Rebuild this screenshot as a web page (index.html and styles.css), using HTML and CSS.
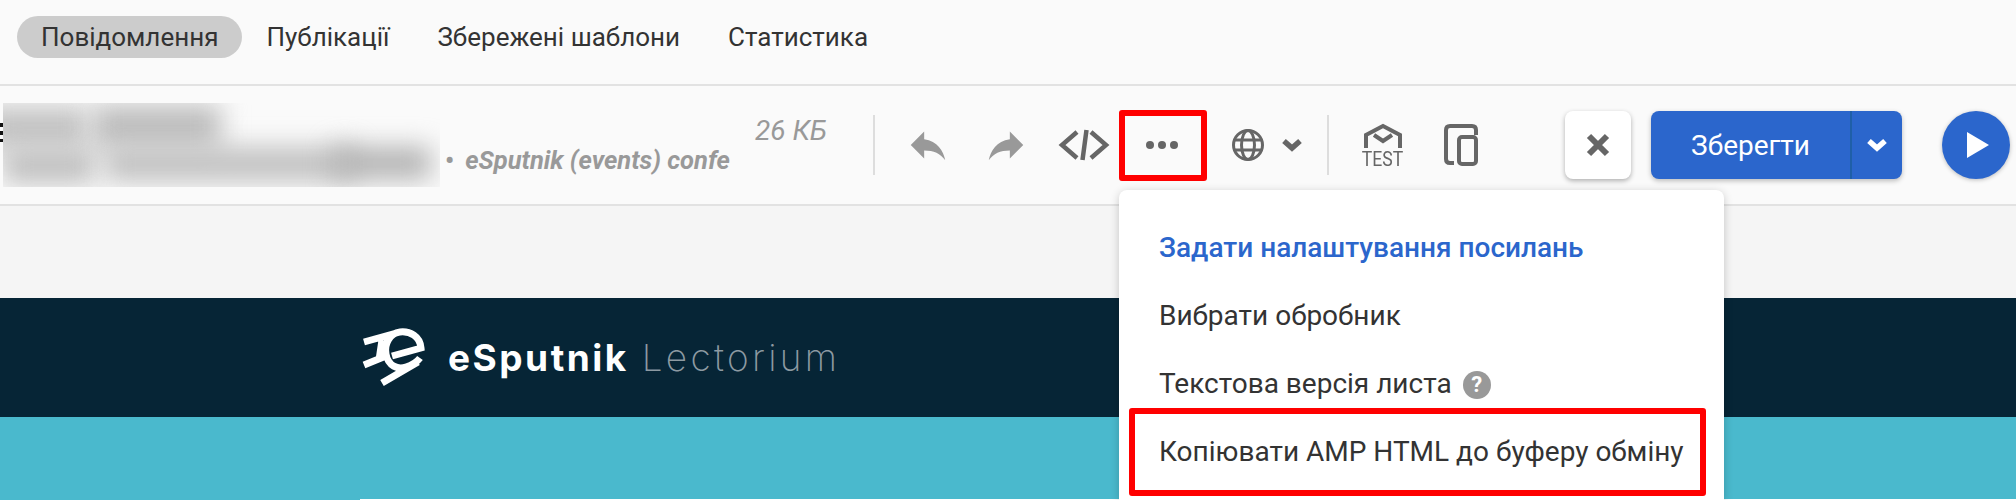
FILE: index.html
```html
<!DOCTYPE html>
<html lang="uk">
<head>
  <meta charset="UTF-8" />
  <title>Редактор листа</title>
  <link rel="stylesheet" href="styles.css">
</head>
<body>
  <!-- tabs -->
  <nav class="tabs">
    <a class="tab active" href="#">Повідомлення</a>
    <a class="tab" href="#">Публікації</a>
    <a class="tab" href="#">Збережені шаблони</a>
    <a class="tab" href="#">Статистика</a>
  </nav>

  <!-- editor toolbar -->
  <div class="toolbar">
    <span class="cut"></span>
    <div class="subject">
      <div class="smudge">
        <span class="blob blob-top-a"></span>
        <span class="blob blob-top-b"></span>
        <span class="blob blob-bottom-a"></span>
        <span class="blob blob-bottom-b"></span>
        <span class="blob blob-bottom-c"></span>
      </div>
      <div class="sender"><span class="dot">•</span>eSputnik (events) confe</div>
    </div>
    <span class="size">26 КБ</span>
    <span class="divider first"></span>

    <div class="tools">
      <button class="tool">
        <svg class="light" width="46" height="46" viewBox="0 0 24 24"><path d="M10 9V5l-7 7 7 7v-4.1c5 0 8.500 1.600 11 5.100-1-5-4-10-11-11z"/></svg>
      </button>
      <button class="tool">
        <svg class="light" width="46" height="46" viewBox="0 0 24 24"><path d="M14 9V5l7 7-7 7v-4.100c-5 0-8.500 1.600-11 5.100 1-5 4-10 11-11z"/></svg>
      </button>
      <button class="tool">
        <svg class="line" width="52" height="36" viewBox="0 0 52 36" stroke-width="4.500"><path d="M19 5 4 18l15 13M33 5l15 13-15 13M28.500 3l-4 30"/></svg>
      </button>
      <button class="tool tool-more">
        <svg class="dark" width="32" height="10" viewBox="0 0 32 10"><circle cx="4" cy="5" r="4"/><circle cx="16" cy="5" r="4"/><circle cx="28" cy="5" r="4"/></svg>
        <span class="mark mark-more"></span>
      </button>
    </div>

    <button class="lang">
      <svg class="line" width="32" height="32" viewBox="0 0 32 32" stroke-width="3"><circle cx="16" cy="16" r="14.500"/><ellipse cx="16" cy="16" rx="6.500" ry="14.500"/><path d="M2 11h28M2 21h28"/></svg>
      <svg class="line" width="22" height="14" viewBox="0 0 22 14" stroke-width="5.500"><path d="m3 3 8 7 8-7"/></svg>
    </button>
    <span class="divider second"></span>

    <button class="tool tool-test">
      <svg class="line" width="40" height="26" viewBox="0 0 40 26" stroke-width="4"><path d="M3 25V12L20 3l17 9v13M11 12l9 6 9-6"/></svg>
      <span class="test-label">TEST</span>
    </button>
    <button class="tool">
      <svg class="line" width="34" height="42" viewBox="0 0 34 42" stroke-width="4"><path d="M10 39H6q-4 0-4-4V6q0-4 4-4h22q4 0 4 4v5"/><rect x="15" y="13" width="17" height="27" rx="3"/></svg>
    </button>

    <button class="close">
      <svg class="line" width="24" height="24" viewBox="0 0 24 24" stroke-width="6"><path d="m3 3 18 18M21 3 3 21"/></svg>
    </button>
    <div class="save">
      <button class="save-main">Зберегти</button>
      <button class="save-more">
        <svg width="22" height="14" viewBox="0 0 22 14"><path d="m3 3 8 7 8-7" fill="none" stroke="#fff" stroke-width="5.500"/></svg>
      </button>
    </div>
    <button class="play">
      <svg width="22" height="26" viewBox="0 0 22 26"><path d="M0 0l22 13L0 26z" fill="#fff"/></svg>
    </button>
  </div>

  <div class="gap"></div>

  <!-- letter preview -->
  <div class="banner">
    <svg class="logo" width="100" height="75" viewBox="0 0 100 75" fill="none" stroke="#fff" stroke-width="7">
      <path d="M14 22 50 12M42 36l29-8C70 16 60 11 50 12 40 13 34 24 36 34c2 12 12 16 20 13 6-2 11-5 14-9M68 42 32 63M32 20l-3 20M14 45l22-9"/>
    </svg>
    <span class="brand">eSputnik</span>
    <span class="brand-sub">Lectorium</span>
  </div>
  <div class="hero">
    <div class="hero-card"></div>
  </div>

  <!-- dropdown -->
  <ul class="menu">
    <li class="menu-item current">Задати налаштування посилань</li>
    <li class="menu-item">Вибрати обробник</li>
    <li class="menu-item">Текстова версія листа <span class="hint">?</span></li>
    <li class="menu-item">Копіювати AMP HTML до буферу обміну<span class="mark mark-copy"></span></li>
  </ul>
</body>
</html>
```

FILE: styles.css
```css
:root {
  --blue: #2b66cc;
  --text: #333;
  --icon: #666;
  --line: #e2e2e2;
  --red: #f00;
}

* {
  margin: 0;
  padding: 0;
  box-sizing: border-box;
}

html, body {
  height: 500px;
  overflow: hidden;
}
body {
  position: relative;
  background: #f5f5f5;
  color: var(--text);
  font-family: Roboto, 'Liberation Sans', sans-serif;
  font-size: 28px;
}
button {
  border: 0;
  background: none;
  font: inherit;
  color: inherit;
  display: flex;
  align-items: center;
  justify-content: center;
}

/* TABS */
.tabs {
  height: 86px;
  padding: 16px 0 0 17px;
  display: flex;
  align-items: flex-start;
  background: #fafafa;
  border-bottom: 2px solid var(--line);
  font-size: 26px;
}
.tab {
  height: 42px;
  line-height: 42px;
  padding: 0 24px;
  border-radius: 21px;
  color: var(--text);
  text-decoration: none;
}
.tab.active { background: #ccc; }

/* TOOLBAR */
.toolbar {
  height: 120px;
  display: flex;
  align-items: center;
  background: #fafafa;
  border-bottom: 2px solid var(--line);
}
.cut {
  width: 3px;
  height: 19px;
  margin-bottom: 26px;
  background: repeating-linear-gradient(#111 0 4px, #fafafa 4px 8px);
}
.subject {
  width: 727px;
  display: flex;
  align-items: flex-end;
  overflow: hidden;
}
.smudge {
  position: relative;
  width: 437px;
  height: 84px;
  flex: none;
  overflow: hidden;
}
.blob {
  position: absolute;
  background: #bbb;
  filter: blur(13px);
}
.blob-top-a { left: -20px; top: 4px; width: 105px; height: 42px; background: #c2c2c2; }
.blob-top-b { left: 90px; top: 2px; width: 128px; height: 44px; background: #bdbdbd; }
.blob-bottom-a { left: 0; top: 46px; width: 92px; height: 34px; background: #bebebe; }
.blob-bottom-b { left: 102px; top: 44px; width: 250px; height: 34px; background: #c0c0c0; }
.blob-bottom-c { left: 330px; top: 44px; width: 98px; height: 32px; background: #b2b2b2; }
.sender {
  flex: none;
  padding-bottom: 12px;
  color: #999;
  font-size: 25.5px;
  font-style: italic;
  font-weight: 700;
  white-space: nowrap;
}
.dot { margin: 0 11px 0 5px; font-style: normal; }
.size {
  width: 72px;
  margin: 0 0 30px 25px;
  color: #999;
  font-size: 28px;
  font-style: italic;
  white-space: nowrap;
}
.divider {
  width: 2px;
  height: 60px;
  background: #ddd;
}
.divider.first { margin-left: 46px; }
.divider.second { margin-left: 15px; }

.light { fill: #999; }
.dark { fill: var(--icon); }
.line { fill: none; stroke: var(--icon); }

.tools {
  display: flex;
  margin-left: 14px;
}
.tool {
  position: relative;
  width: 78px;
  height: 60px;
}
.tool-test {
  margin-left: 15px;
  flex-direction: column;
  gap: 2px;
}
.test-label {
  color: var(--icon);
  font-size: 20px;
  line-height: 16px;
  transform: scaleX(0.88);
}
.lang {
  width: 80px;
  height: 60px;
  margin-left: 31px;
  gap: 17px;
  justify-content: flex-start;
}

/* the red marks over the screenshot */
.mark {
  position: absolute;
  border: 6px solid var(--red);
  border-radius: 3px;
}
.mark-more { left: -4px; right: -6px; top: -5px; bottom: -6px; }
.mark-copy { left: 10px; right: 18px; top: -10px; bottom: -10px; }

.close {
  width: 66px;
  height: 68px;
  margin-left: 65px;
  background: #fff;
  border-radius: 8px;
  box-shadow: 0 2px 5px rgba(0,0,0,0.3);
}
.save {
  width: 251px;
  height: 68px;
  margin-left: 20px;
  display: flex;
  background: var(--blue);
  border-radius: 8px;
  box-shadow: 0 2px 5px rgba(0,0,0,0.25);
}
.save-main {
  width: 201px;
  color: #fff;
  border-right: 2px solid #1f5fa8;
}
.save-more { flex: 1; }
.play {
  width: 68px;
  height: 68px;
  margin-left: 40px;
  padding-left: 4px;
  background: var(--blue);
  border-radius: 50%;
  box-shadow: 0 1px 4px rgba(0,0,0,0.25);
}

.gap { height: 92px; }

/* LETTER PREVIEW */
.banner {
  height: 119px;
  padding-left: 350px;
  display: flex;
  align-items: center;
  background: #062536;
  color: #fff;
}
.logo { flex: none; }
.brand {
  margin-left: -2px;
  font-family: Inter, sans-serif;
  font-size: 37px;
  font-weight: 700;
  letter-spacing: 2.5px;
}
.brand-sub {
  margin-left: 13px;
  color: #8d9aa2;
  font-family: Inter, sans-serif;
  font-size: 37px;
  font-weight: 200;
  letter-spacing: 3.300px;
}
.hero {
  height: 83px;
  padding: 82px 0 0 360px;
  background: #4ab9cd;
}
.hero-card {
  height: 1px;
  background: #fff;
}

/* DROPDOWN */
.menu {
  position: absolute;
  left: 1119px;
  top: 190px;
  width: 605px;
  height: 310px;
  padding-top: 24px;
  list-style: none;
  background: #fff;
  border-radius: 8px 8px 0 0;
  box-shadow: 0 2px 10px rgba(0,0,0,0.2);
}
.menu-item {
  height: 68px;
  line-height: 68px;
  padding-left: 40px;
  white-space: nowrap;
}
.menu-item.current {
  color: var(--blue);
  font-weight: 500;
}
.mark-copy { display: block; height: 88px; }
.menu-item:last-child { position: relative; }
.hint {
  display: inline-block;
  width: 28px;
  height: 28px;
  margin-left: 4px;
  border-radius: 50%;
  background: #999;
  color: #fff;
  font-size: 22px;
  font-weight: 700;
  line-height: 28px;
  text-align: center;
  vertical-align: 1px;
}
```
